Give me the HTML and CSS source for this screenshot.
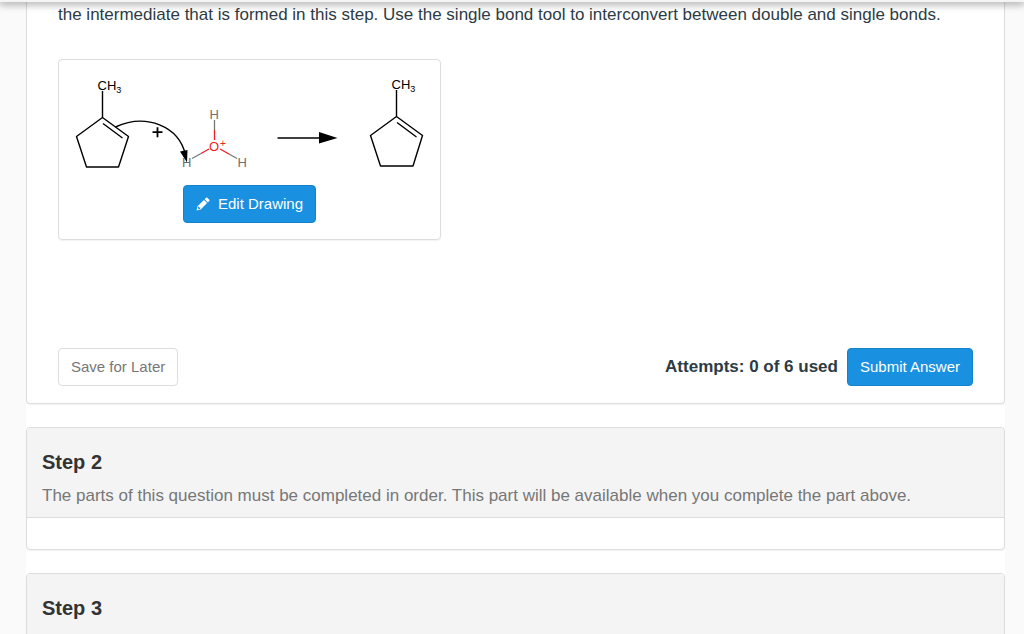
FILE: index.html
```html
<!DOCTYPE html>
<html lang="en">
<head>
<meta charset="utf-8">
<title>Reaction mechanism</title>
<link rel="stylesheet" href="styles.css">
</head>
<body>
<header class="topbar"></header>
<main class="content">
  <section class="panel question">
    <p class="prompt">the intermediate that is formed in this step. Use the single bond tool to interconvert between double and single bonds.</p>
    <div class="drawing">
      <svg class="molecules" width="381" height="125" viewBox="59 60 381 125" role="img" aria-label="1-methylcyclopentene plus hydronium gives 1-methylcyclopentene">
        <g fill="none" stroke="#000" stroke-width="1.4" stroke-linejoin="round">
          <path d="M102.500 91V117.500L128.500 136.500L118.500 167H86.500L76.500 136.500L102.500 117.500M103 123.500L122.500 138"/>
          <path d="M396.500 90V116.500L422.500 135.500L413 166H380.500L370.500 135.500L396.500 116.500M397 122.500L416.500 137"/>
          <path d="M115.500 127C146 113 179 126 185.500 155"/>
          <path d="M277.500 138H322"/>
          <path stroke-width="1.8" d="M152.500 132.200H162.500M157.500 127.200V137.200"/>
        </g>
        <g fill="none" stroke-width="1.3">
          <path stroke="#777" d="M214.500 120V130M201 153.500L192 158.500M229 154L237 158.500"/>
          <path stroke="#ed1c24" d="M214.500 130V140M209 149L201 153.500M220 149L229 154"/>
        </g>
        <g class="atoms">
          <text x="97.500" y="90">CH<tspan class="sub" dy="3">3</tspan></text>
          <text x="391.500" y="89">CH<tspan class="sub" dy="3">3</tspan></text>
          <g class="hydrogen"><text x="209.500" y="119">H</text><text x="182" y="166.500">H</text><text x="237.500" y="166.500">H</text></g>
          <g class="oxygen"><text x="209" y="151">O</text><text class="charge" x="220" y="147">+</text></g>
        </g>
        <path d="M180 151.500L187.500 150L187 162.500ZM319 132L337.500 138L319 143.500Z"/>
      </svg>
      <button class="btn primary" type="button">
        <svg class="pencil" width="14" height="14" viewBox="0 0 14 14" aria-hidden="true">
          <path fill="currentColor" fill-rule="evenodd" d="M.5 13.500L1.500 9.300L7.900 2.900L11.100 6.100L4.700 12.500ZM1.700 11L3 12.300L4.200 11.900V10.600H2.900V9.400L2.200 9.600ZM8.600 2.200L10.100.7Q10.700.1 11.300.7L13.300 2.700Q13.900 3.300 13.300 3.900L11.800 5.400Z"/>
        </svg>
        Edit Drawing
      </button>
    </div>
    <div class="actions">
      <button class="btn" type="button">Save for Later</button>
      <div class="submit">
        <strong class="attempts">Attempts: 0 of 6 used</strong>
        <button class="btn primary" type="button">Submit Answer</button>
      </div>
    </div>
  </section>
  <section class="panel">
    <div class="step-head">
      <h2>Step 2</h2>
      <p>The parts of this question must be completed in order. This part will be available when you complete the part above.</p>
    </div>
    <div class="step-body"></div>
  </section>
  <section class="panel">
    <div class="step-head">
      <h2>Step 3</h2>
    </div>
  </section>
</main>
</body>
</html>
```
FILE: styles.css
```css
* { box-sizing: border-box; }
html { height: 100%; overflow: hidden; }
body {
  margin: 0;
  height: 100%;
  overflow: hidden;
  background: #fafafa;
  color: #2d3b45;
  font: 17px/26px "Liberation Sans", Arial, sans-serif;
}
.topbar {
  position: relative;
  height: 2px;
  background: #f5f5f5;
  box-shadow: 0 0 8px 1px rgba(0, 0, 0, 0.6);
}
.content {
  margin: 0 19px 0 26px;
  background: #fff;
  display: flex;
  flex-direction: column;
  gap: 23px;
}
.panel {
  background: #fff;
  border: 1px solid #ddd;
  border-radius: 4px;
  box-shadow: 0 1px 1px rgba(0, 0, 0, 0.05);
}
.question {
  border-top: 0;
  border-radius: 0 0 4px 4px;
  padding: 0 31px 17px;
}
.prompt { margin: 0 0 31px; }
.drawing {
  width: fit-content;
  border: 1px solid #ddd;
  border-radius: 4px;
  box-shadow: 0 1px 1px rgba(0, 0, 0, 0.05);
  padding-bottom: 16px;
  display: flex;
  flex-direction: column;
  align-items: center;
}
.molecules { display: block; }
.atoms { font-size: 13px; }
.sub { font-size: 9px; }
.hydrogen { fill: #707070; }
.oxygen { fill: #ed1c24; }
.charge { font-size: 10px; }
.btn {
  display: inline-flex;
  align-items: center;
  gap: 8px;
  height: 38px;
  padding: 0 12px;
  border: 1px solid #ddd;
  border-radius: 4px;
  background: #fff;
  color: #777;
  font: 15px/20px "Liberation Sans", Arial, sans-serif;
  white-space: nowrap;
}
.primary {
  background: #1990e0;
  border-color: #1682cb;
  color: #fff;
}
.actions {
  margin-top: 108px;
  display: flex;
  justify-content: space-between;
  align-items: center;
}
.submit { display: flex; align-items: center; gap: 9px; }
.step-head {
  padding: 20px 15px 8px;
  background: #f4f4f4;
  border-bottom: 1px solid #ddd;
  border-radius: 3px 3px 0 0;
}
.step-head h2 {
  margin: 0 0 7px;
  color: #333;
  font-size: 20px;
  line-height: 28px;
  font-weight: bold;
}
.step-head p { margin: 0; color: #777; }
.step-body { height: 31px; }
```
